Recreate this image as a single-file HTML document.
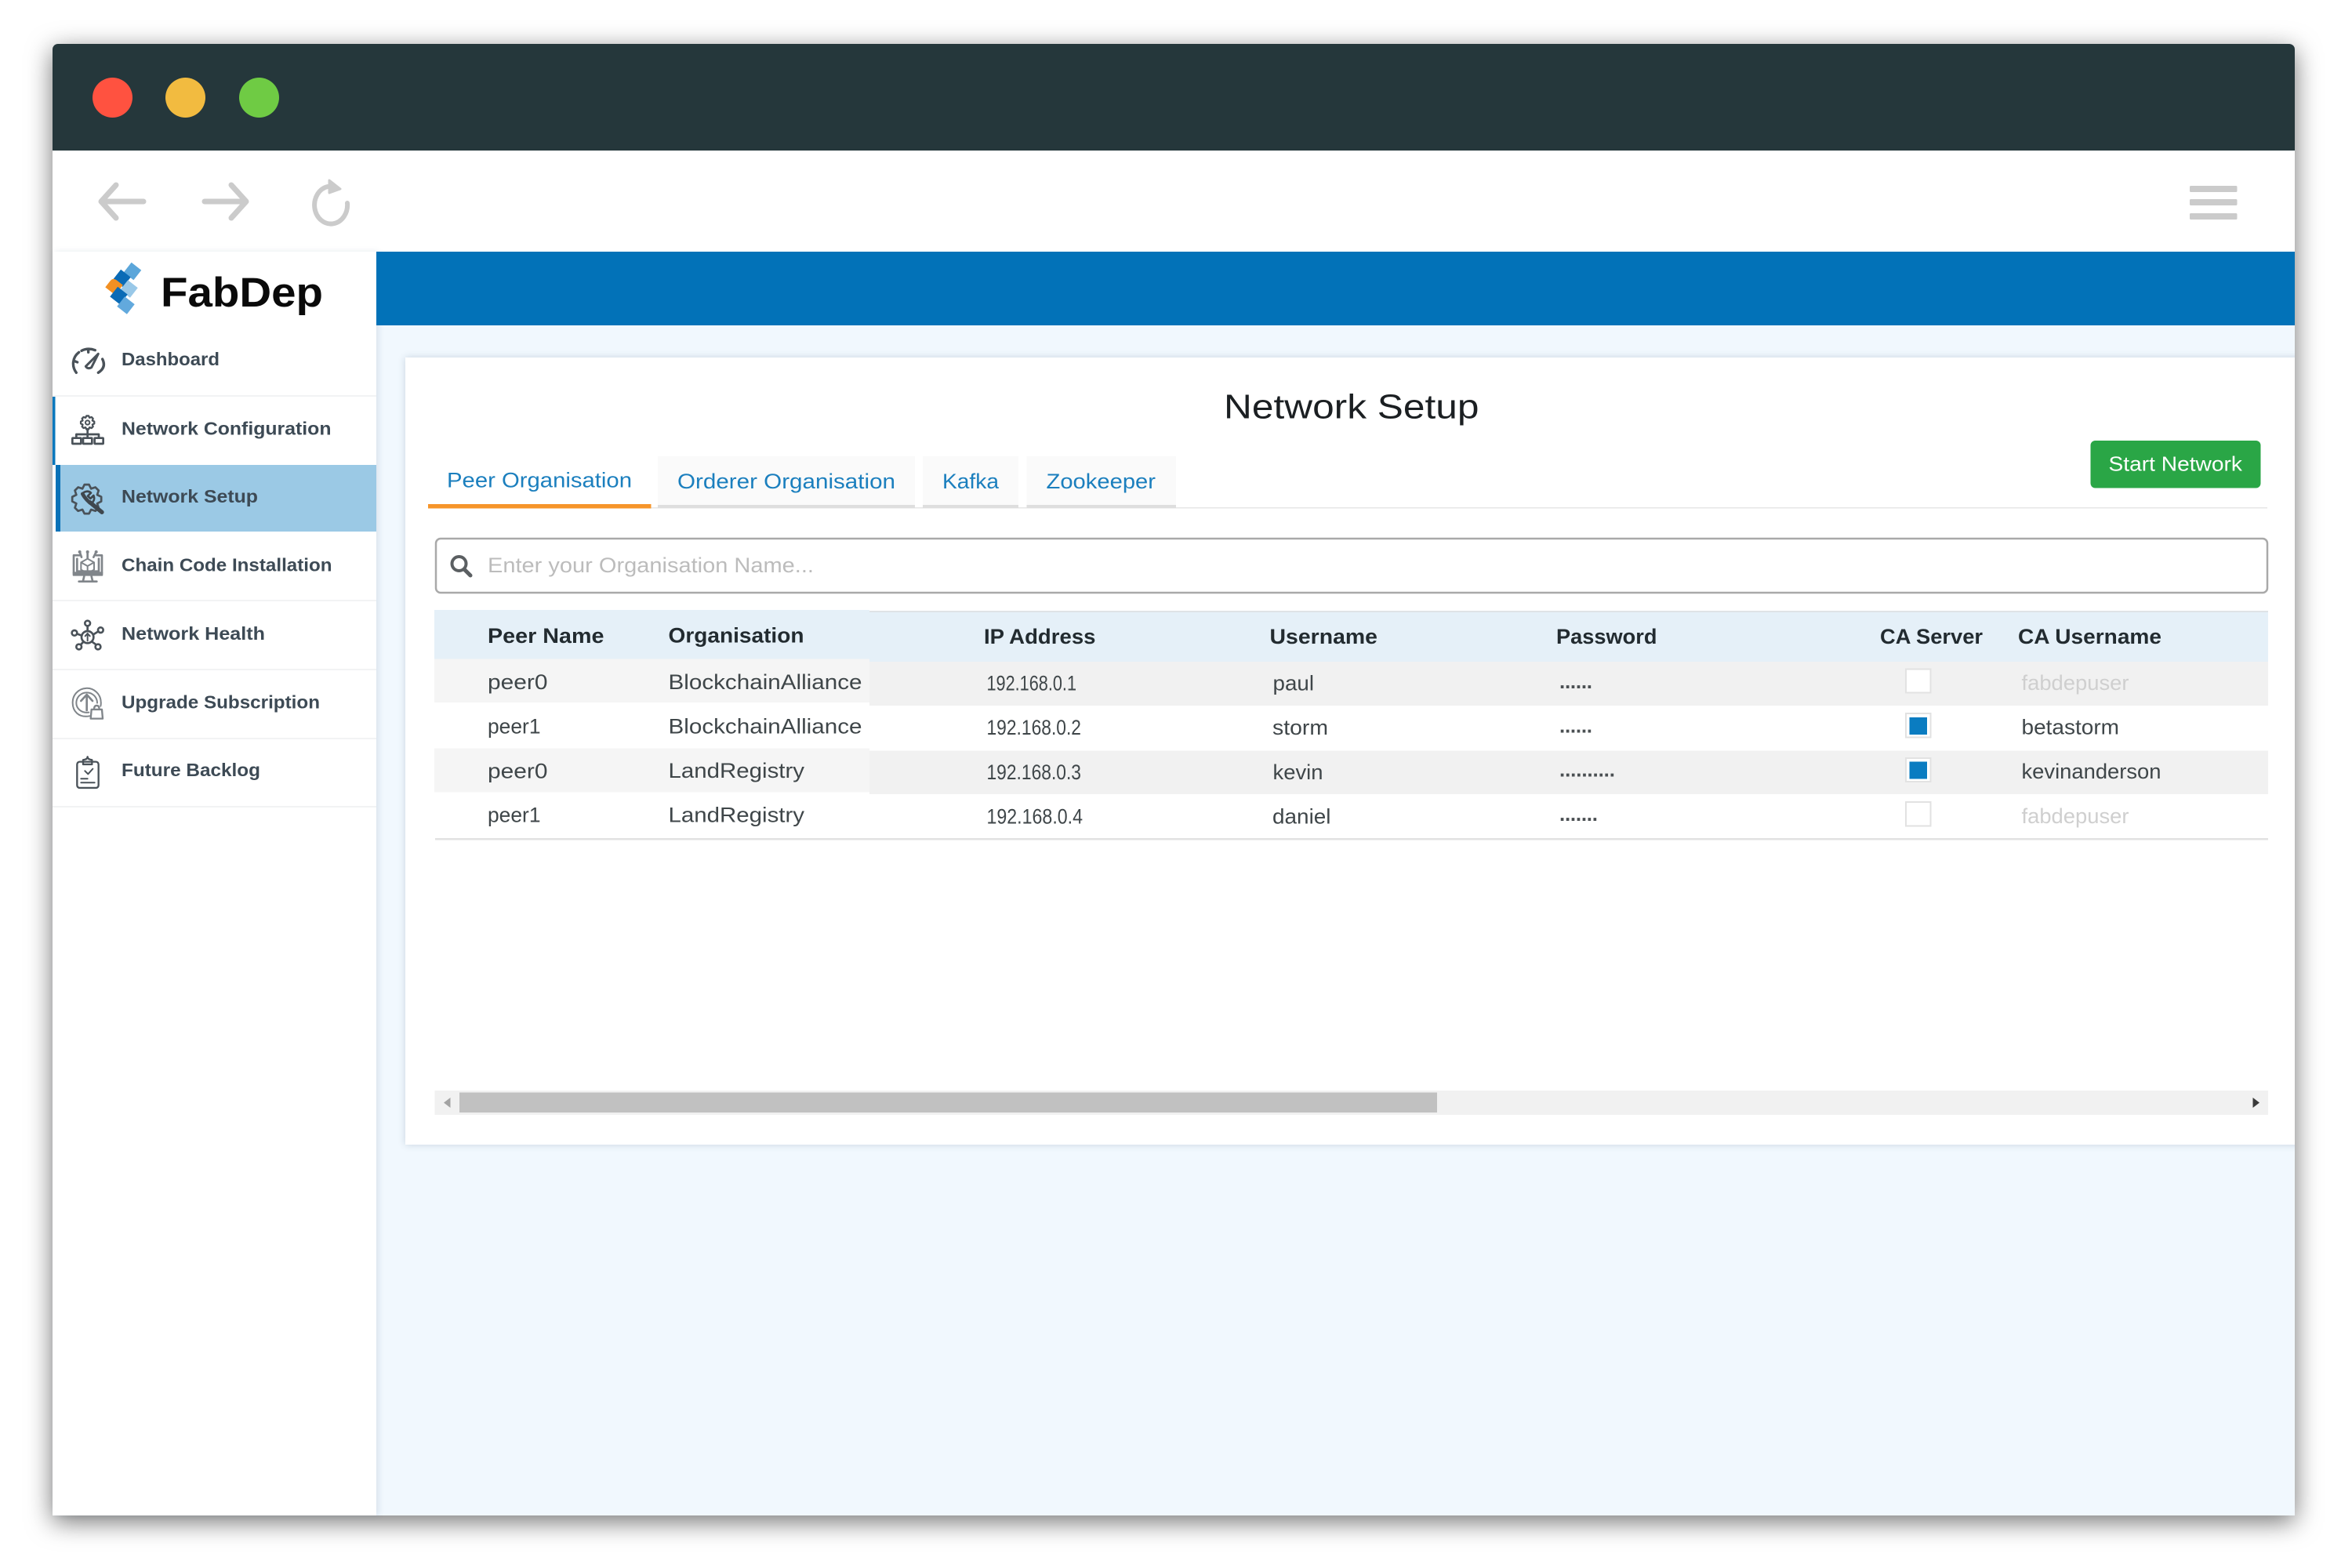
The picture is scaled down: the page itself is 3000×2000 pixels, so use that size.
<!DOCTYPE html>
<html lang="en"><head><meta charset="utf-8"><title>FabDep - Network Setup</title>
<style>
html,body{margin:0;padding:0;width:3000px;height:2000px;background:#fff;overflow:hidden}
#win{position:absolute;left:67px;top:56px;width:2860px;height:1877px;border-radius:7px 7px 0 0;background:#fff;box-shadow:0 8px 32px rgba(0,0,0,.55)}
#main{position:absolute;left:480px;top:415px;width:2447px;height:1518px;background:#f1f8fe;overflow:hidden}
#card{position:absolute;left:37px;top:41px;width:2460px;height:1004px;background:#fff;box-shadow:0 0 9px rgba(40,70,100,.2)}
#side{position:absolute;left:67px;top:321px;width:413px;height:1612px;background:#fff;box-shadow:3px 0 7px rgba(60,90,120,.13)}
svg{position:absolute;left:0;top:0}
text{font-family:"Liberation Sans",sans-serif}
.n{font-size:23px;font-weight:700;fill:#3d4a55}
.h{font-size:26.5px;font-weight:700;fill:#222b30}
.c{font-size:26.5px;fill:#3f4649}
.t{font-size:27px;fill:#1b7fbe}
.g{fill:#cfcfcf}
.d{font-size:26px;font-weight:700;fill:#4a4f52}
.i{fill:none;stroke:#4a5259;stroke-width:8;stroke-linecap:round;stroke-linejoin:round}
.l{stroke:#80858a}
</style></head>
<body>
<div id="win"></div>
<div id="main"><div id="card"></div></div>
<div id="side"></div>
<svg width="3000" height="2000" viewBox="0 0 3000 2000" xmlns="http://www.w3.org/2000/svg">
<defs>
<path id="cog" d="M51.4-8.1L51.4 8.1 37 15.3 42 30.6 30.6 42 15.3 37 8.1 51.4-8.1 51.4-15.3 37-30.6 42-42 30.6-37 15.3-51.4 8.1-51.4-8.1-37-15.3-42-30.6-30.6-42-15.3-37-8.1-51.4 8.1-51.4 15.3-37 30.6-42 42-30.6 37-15.3Z"/>
</defs>

<!-- title bar -->
<path d="M67 192V63a7 7 0 0 1 7-7H2920a7 7 0 0 1 7 7V192Z" fill="#25373b"/>
<circle cx="143.5" cy="124.5" r="25.5" fill="#ff5240"/>
<circle cx="236.5" cy="124.5" r="25.5" fill="#f2bb40"/>
<circle cx="330.5" cy="124.5" r="25.5" fill="#6fcb44"/>

<!-- toolbar icons -->
<g fill="none" stroke="#cbcbcb" stroke-width="7" stroke-linecap="round" stroke-linejoin="round">
<path d="M183 257H130M148 236L129 257 148 278"/>
<path d="M261 257H314M295 236L314 257 295 278"/>
</g>
<path d="M443 259A21 24 0 1 1 418 238" fill="none" stroke="#cbcbcb" stroke-width="6" stroke-linecap="round"/>
<path d="M420 230L434 241 420 246Z" fill="#cbcbcb" stroke="#cbcbcb" stroke-width="3" stroke-linejoin="round"/>
<g fill="#cbcbcb"><rect x="2793" y="237" width="60.500" height="8" rx="1.500"/><rect x="2793" y="254" width="60.500" height="8" rx="1.500"/><rect x="2793" y="272" width="60.500" height="8" rx="1.500"/></g>

<!-- blue bar -->
<rect x="480" y="321" width="2447" height="94" fill="#0272b8"/>

<!-- logo -->
<g>
<rect x="-8" y="-8" width="16" height="16" fill="#5ba6da" transform="translate(169 346) rotate(38)"/>
<rect x="-8" y="-8" width="16" height="16" fill="#0a6bb6" transform="translate(155.500 355) rotate(38)"/>
<path d="M-8-8H8V8H-8V-2Q-8-8-2-8Z" fill="#f29023" transform="translate(145.500 365) rotate(38)"/>
<rect x="-8" y="-8" width="16" height="16" fill="#99c8e8" transform="translate(164.500 368.500) rotate(38)"/>
<rect x="-8" y="-8" width="16" height="16" fill="#0a6bb6" transform="translate(151.500 377) rotate(38)"/>
<rect x="-8" y="-8" width="16" height="16" fill="#62a9dd" transform="translate(160.500 389.500) rotate(38)"/>
</g>
<text x="205" y="391" textLength="207" lengthAdjust="spacingAndGlyphs" font-size="53" font-weight="700" fill="#0a0a0a">FabDep</text>

<!-- sidebar rows -->
<g fill="#f2f3f4">
<rect x="67" y="504" width="413" height="2"/><rect x="67" y="765" width="413" height="2"/><rect x="67" y="853" width="413" height="2"/><rect x="67" y="941" width="413" height="2"/><rect x="67" y="1028" width="413" height="2"/>
</g>
<rect x="67" y="506" width="3.500" height="87" fill="#0a78bd"/>
<rect x="71" y="593" width="409" height="85" fill="#9bc9e5"/>
<rect x="71" y="593" width="6" height="85" fill="#0a72b8"/>

<text class="n" x="155" y="466" textLength="125" lengthAdjust="spacingAndGlyphs">Dashboard</text>
<text class="n" x="155" y="554.500" textLength="267.500" lengthAdjust="spacingAndGlyphs">Network Configuration</text>
<text class="n" x="155" y="641" textLength="174" lengthAdjust="spacingAndGlyphs">Network Setup</text>
<text class="n" x="155" y="728.500" textLength="268.500" lengthAdjust="spacingAndGlyphs">Chain Code Installation</text>
<text class="n" x="155" y="816" textLength="183" lengthAdjust="spacingAndGlyphs">Network Health</text>
<text class="n" x="155" y="903.500" textLength="253" lengthAdjust="spacingAndGlyphs">Upgrade Subscription</text>
<text class="n" x="155" y="990" textLength="177" lengthAdjust="spacingAndGlyphs">Future Backlog</text>

<!-- sidebar icons: drawn in 3x coordinates -->
<g transform="translate(80 430) scale(.3333)">
<g class="i">
<path d="M52 136C34 112 36 78 62 58M72 52C92 42 108 44 124 50M152 84C162 104 158 122 136 136M98 46V58M46 92L56 96" stroke-width="10"/>
<path d="M88 112L136 64 110 116Q96 124 88 112Z" stroke-width="9"/>
<use href="#cog" transform="translate(95 327) scale(.5)" style="stroke-width:14"/>
<circle cx="95" cy="327" r="8" stroke-width="6"/>
<path d="M95 352V368M52 385V372H138V385M95 368V385"/>
<rect x="37" y="386" width="33" height="22" rx="2"/><rect x="78" y="386" width="34" height="22" rx="2"/><rect x="122" y="386" width="33" height="22" rx="2"/>
<use href="#cog" transform="translate(92 620) scale(1.08)" style="stroke-width:7.500"/>
</g>
<path d="M74 602C80 590 98 586 108 596L96 608 106 618 118 606C124 620 118 632 106 636L150 668" fill="none" stroke="#3f474e" stroke-width="8" stroke-linejoin="round"/>
<path d="M104 632L150 670" stroke="#3f474e" stroke-width="16" stroke-linecap="round"/>
<path d="M76 600C82 612 90 622 104 634" stroke="#3f474e" stroke-width="14" stroke-linecap="round"/>
</g>

<g transform="translate(80 690) scale(.3333)">
<g class="i l">
<path d="M65 55H42V130H150V55H128"/>
<path d="M55 68V116H138V68"/>
<path d="M42 122H150M82 135L78 152M110 135L114 152M62 155H130"/>
<path d="M65 42L72 62M95 42V65M128 42L118 62"/>
<path d="M95 68L120 82V110L95 124 70 110V82ZM70 82L95 96 120 82M95 96V124" stroke-width="6"/>
<circle cx="65" cy="42" r="2"/><circle cx="95" cy="42" r="2"/><circle cx="128" cy="42" r="2"/>
</g>
<g class="i">
<circle cx="95" cy="368" r="23"/>
<path d="M95 382V354M86 364L95 354 104 364" stroke-width="6"/>
<circle cx="95" cy="315" r="10"/><circle cx="45" cy="352" r="10"/><circle cx="145" cy="341" r="10"/><circle cx="62" cy="405" r="10"/><circle cx="135" cy="405" r="10"/>
<path d="M95 325V345M54 355L73 362M136 346L117 358M69 397L80 385M128 397L111 385"/>
</g>
<g class="i l">
<path d="M103 670C60 678 38 650 38 620A54 54 0 0 1 146 615Q147 624 145 632" stroke-width="6"/>
<path d="M100 656C70 660 52 640 52 620A40 40 0 0 1 132 620" stroke-width="6"/>
<path d="M92 648V590M70 612L92 588 114 612" stroke-width="8"/>
<path d="M110 645H150L153 680H107ZM120 645Q120 630 130 630T140 645" stroke-width="7"/>
</g>
<g class="i">
<rect x="55" y="845" width="82" height="100" rx="10" stroke-width="7"/>
<path d="M78 855V838Q95 836 95 826 95 836 112 838V855Z" stroke-width="7"/>
<path d="M85 880L97 892 115 872" stroke-width="6"/>
<path d="M70 910H95M70 925H122" stroke-width="6"/>
</g>
</g>

<!-- card content -->
<text x="1561" y="533.500" textLength="325.500" lengthAdjust="spacingAndGlyphs" font-size="44" fill="#1b1f22">Network Setup</text>

<!-- tabs -->
<rect x="550" y="647" width="2342" height="1.500" fill="#e6e6e6"/>
<rect x="839" y="582" width="328" height="63" fill="#fafafa"/>
<rect x="1177" y="582" width="122" height="63" fill="#fafafa"/>
<rect x="1309.500" y="582" width="190.500" height="63" fill="#fafafa"/>
<rect x="839" y="644" width="328" height="4" fill="#dedede"/>
<rect x="1177" y="644" width="122" height="4" fill="#dedede"/>
<rect x="1309.500" y="644" width="190.500" height="4" fill="#dedede"/>
<rect x="546" y="643" width="284.500" height="5.500" fill="#f6952a"/>
<text class="t" x="570" y="621.500" textLength="236" lengthAdjust="spacingAndGlyphs">Peer Organisation</text>
<text class="t" x="864" y="623" textLength="278" lengthAdjust="spacingAndGlyphs">Orderer Organisation</text>
<text class="t" x="1202" y="623" textLength="72" lengthAdjust="spacingAndGlyphs">Kafka</text>
<text class="t" x="1334.500" y="623" textLength="139.500" lengthAdjust="spacingAndGlyphs">Zookeeper</text>

<!-- start button -->
<rect x="2666.500" y="562" width="217" height="60.500" rx="6" fill="#2aa646"/>
<text x="2689.500" y="600.500" textLength="170.500" lengthAdjust="spacingAndGlyphs" font-size="26" fill="#fff">Start Network</text>

<!-- search -->
<rect x="556" y="687" width="2336" height="69" rx="6" fill="#fff" stroke="#a9a9a9" stroke-width="2.500"/>
<circle cx="585.500" cy="719" r="9" fill="none" stroke="#5b5f62" stroke-width="4"/>
<path d="M592 726L600 734" stroke="#5b5f62" stroke-width="5" stroke-linecap="round"/>
<text x="622" y="730" textLength="416" lengthAdjust="spacingAndGlyphs" font-size="27" fill="#bcbcbc">Enter your Organisation Name...</text>

<!-- table -->
<rect x="1109" y="780" width="1784" height="64" fill="#e5f0f8"/>
<rect x="1109" y="779" width="1784" height="2" fill="#dfe3e6"/>
<rect x="554" y="778" width="555" height="62.500" fill="#e5f0f8"/>
<rect x="1109" y="844" width="1784" height="56" fill="#f1f1f1"/>
<rect x="554" y="840.500" width="555" height="55.500" fill="#f5f5f5"/>
<rect x="1109" y="957.500" width="1784" height="55.500" fill="#f1f1f1"/>
<rect x="554" y="954.500" width="555" height="56" fill="#f5f5f5"/>
<rect x="555" y="1069" width="2338" height="2.500" fill="#e2e2e2"/>

<text class="h" x="622" y="820" textLength="148.500" lengthAdjust="spacingAndGlyphs">Peer Name</text>
<text class="h" x="852.500" y="819.500" textLength="173" lengthAdjust="spacingAndGlyphs">Organisation</text>
<text class="h" x="1255" y="821" textLength="142.500" lengthAdjust="spacingAndGlyphs">IP Address</text>
<text class="h" x="1619.500" y="821" textLength="137.500" lengthAdjust="spacingAndGlyphs">Username</text>
<text class="h" x="1985" y="821" textLength="128.500" lengthAdjust="spacingAndGlyphs">Password</text>
<text class="h" x="2398" y="821" textLength="131" lengthAdjust="spacingAndGlyphs">CA Server</text>
<text class="h" x="2574" y="821" textLength="183" lengthAdjust="spacingAndGlyphs">CA Username</text>

<text class="c" x="622" y="879" textLength="76.500" lengthAdjust="spacingAndGlyphs">peer0</text>
<text class="c" x="622" y="935.500" textLength="67.500" lengthAdjust="spacingAndGlyphs">peer1</text>
<text class="c" x="622" y="992.500" textLength="76.500" lengthAdjust="spacingAndGlyphs">peer0</text>
<text class="c" x="622" y="1048.500" textLength="67.500" lengthAdjust="spacingAndGlyphs">peer1</text>

<text class="c" x="852.500" y="879" textLength="247" lengthAdjust="spacingAndGlyphs">BlockchainAlliance</text>
<text class="c" x="852.500" y="935.500" textLength="247" lengthAdjust="spacingAndGlyphs">BlockchainAlliance</text>
<text class="c" x="852.500" y="992" textLength="173.500" lengthAdjust="spacingAndGlyphs">LandRegistry</text>
<text class="c" x="852.500" y="1048.500" textLength="173.500" lengthAdjust="spacingAndGlyphs">LandRegistry</text>

<text class="c" x="1258.500" y="880.500" textLength="114.500" lengthAdjust="spacingAndGlyphs">192.168.0.1</text>
<text class="c" x="1258.500" y="937" textLength="120.500" lengthAdjust="spacingAndGlyphs">192.168.0.2</text>
<text class="c" x="1258.500" y="994" textLength="120.500" lengthAdjust="spacingAndGlyphs">192.168.0.3</text>
<text class="c" x="1258.500" y="1050.500" textLength="122.500" lengthAdjust="spacingAndGlyphs">192.168.0.4</text>

<text class="c" x="1623.500" y="880.500" textLength="52.500" lengthAdjust="spacingAndGlyphs">paul</text>
<text class="c" x="1623" y="937" textLength="71" lengthAdjust="spacingAndGlyphs">storm</text>
<text class="c" x="1623.500" y="994" textLength="64" lengthAdjust="spacingAndGlyphs">kevin</text>
<text class="c" x="1623" y="1050.500" textLength="74.500" lengthAdjust="spacingAndGlyphs">daniel</text>

<text class="d" x="1989" y="878" textLength="42" lengthAdjust="spacing">......</text>
<text class="d" x="1989" y="934.500" textLength="42" lengthAdjust="spacing">......</text>
<text class="d" x="1989" y="990.500" textLength="71" lengthAdjust="spacing">..........</text>
<text class="d" x="1989" y="1047" textLength="49" lengthAdjust="spacing">.......</text>

<g fill="#fff" stroke="#e2e2e2" stroke-width="2">
<rect x="2431" y="853.500" width="31.500" height="30"/>
<rect x="2431" y="910" width="31.500" height="30.500"/>
<rect x="2431" y="967" width="31.500" height="30"/>
<rect x="2431" y="1023" width="31.500" height="30.500"/>
</g>
<rect x="2435.500" y="915" width="22.500" height="22" fill="#0a7cc1"/>
<rect x="2435.500" y="971.500" width="22.500" height="22" fill="#0a7cc1"/>

<text class="c g" x="2578.500" y="880" textLength="137" lengthAdjust="spacingAndGlyphs">fabdepuser</text>
<text class="c" x="2578.500" y="936.500" textLength="124.500" lengthAdjust="spacingAndGlyphs">betastorm</text>
<text class="c" x="2578.500" y="993" textLength="178" lengthAdjust="spacingAndGlyphs">kevinanderson</text>
<text class="c g" x="2578.500" y="1050" textLength="137" lengthAdjust="spacingAndGlyphs">fabdepuser</text>

<!-- scrollbar -->
<rect x="554.500" y="1391" width="2338.500" height="31" fill="#f1f1f1"/>
<rect x="586" y="1393.500" width="1247" height="25.500" fill="#c1c1c1"/>
<path d="M574.500 1400V1413L566 1406.500Z" fill="#a3a3a3"/>
<path d="M2873.500 1400V1413L2882 1406.500Z" fill="#3a3a3a"/>
</svg>
</body></html>
